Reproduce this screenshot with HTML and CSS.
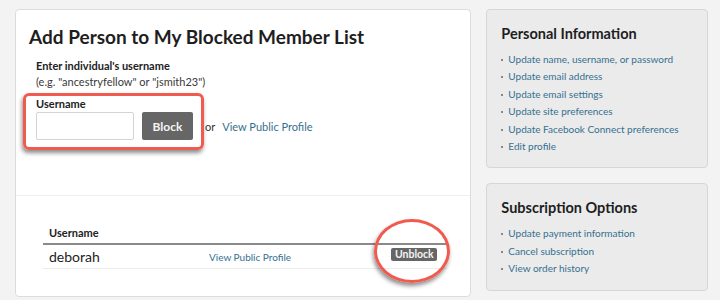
FILE: index.html
```html
<!DOCTYPE html>
<html>
<head>
<meta charset="utf-8">
<link rel="stylesheet" href="styles.css">
</head>
<body>
<div class="page">
  <main class="card main">
    <section class="add">
      <h1 class="title">Add Person to My Blocked Member List</h1>
      <div class="hint-label">Enter individual's username</div>
      <div class="hint">(e.g. "ancestryfellow" or "jsmith23")</div>
      <div class="form-row">
        <div class="field">
          <label class="field-label">Username</label>
          <div class="field-controls">
            <input class="input" type="text">
            <button class="btn">Block</button>
          </div>
          <span class="mark-box"></span>
        </div>
        <span class="or">or</span>
        <a class="link" href="#">View Public Profile</a>
      </div>
    </section>
    <section class="list">
      <div class="table">
        <div class="thead">Username</div>
        <div class="row">
          <span class="name">deborah</span>
          <a class="link small" href="#">View Public Profile</a>
          <span class="unblock-wrap">
            <button class="btn-small">Unblock</button>
            <span class="mark-ellipse"></span>
          </span>
        </div>
      </div>
    </section>
  </main>
  <aside class="side">
    <div class="card side-card">
      <h2 class="side-title">Personal Information</h2>
      <ul class="side-list">
        <li><a href="#">Update name, username, or password</a></li>
        <li><a href="#">Update email address</a></li>
        <li><a href="#">Update email settings</a></li>
        <li><a href="#">Update site preferences</a></li>
        <li><a href="#">Update Facebook Connect preferences</a></li>
        <li><a href="#">Edit profile</a></li>
      </ul>
    </div>
    <div class="card side-card">
      <h2 class="side-title">Subscription Options</h2>
      <ul class="side-list">
        <li><a href="#">Update payment information</a></li>
        <li><a href="#">Cancel subscription</a></li>
        <li><a href="#">View order history</a></li>
      </ul>
    </div>
  </aside>
</div>
</body>
</html>
```

FILE: styles.css
```css
* { box-sizing: border-box; }
html, body { margin: 0; padding: 0; }
body {
  background: #f3f3f3;
  font-family: Lato, "Open Sans", sans-serif;
  color: #222;
  width: 720px;
  height: 300px;
  overflow: hidden;
}
.page {
  display: flex;
  gap: 15px;
  padding: 9px 12px 0 15px;
  align-items: flex-start;
}
.card {
  border: 1px solid #dcdcdc;
  border-radius: 4px;
}
.main {
  background: #fff;
  width: 457px;
  height: 288px;
  display: flex;
  flex-direction: column;
}
.add {
  padding: 15px 13px 0 13px;
  height: 186px;
  border-bottom: 1px solid #efefef;
}
.title {
  margin: 0;
  font-size: 19px;
  font-weight: 700;
  line-height: 24px;
  color: #1e1e1e;
}
.hint-label {
  margin: 9px 0 0 7px;
  font-size: 11px;
  font-weight: 700;
  line-height: 16px;
}
.hint {
  margin-left: 7px;
  font-size: 11px;
  line-height: 15px;
  color: #3a3a3a;
}
.form-row {
  display: flex;
  align-items: flex-end;
  margin: 8px 0 0 7px;
}
.field {
  position: relative;
}
.field-label {
  display: block;
  font-size: 11px;
  font-weight: 700;
  line-height: 14px;
  margin-bottom: 1px;
}
.field-controls {
  display: flex;
  gap: 8px;
}
.input {
  width: 98px;
  height: 28px;
  border: 1px solid #d4d4d4;
  border-radius: 2px;
  background: #fff;
  margin: 0;
}
.btn {
  width: 51px;
  height: 28px;
  border: 0;
  border-radius: 2px;
  background: #666;
  color: #f4f4f4;
  font-family: inherit;
  font-weight: 700;
  font-size: 12px;
  padding: 0;
}
.mark-box {
  position: absolute;
  left: -13px;
  top: -4px;
  width: 181px;
  height: 57px;
  border: 3px solid #f05a4f;
  border-radius: 6px;
  box-shadow: -1px 3px 4px rgba(0,0,0,0.45);
}
.or {
  font-size: 11px;
  margin: 0 0 7px 12px;
  color: #333;
}
.link {
  color: #35708f;
  text-decoration: none;
  font-size: 11px;
  margin: 0 0 7px 7px;
}
.list {
  flex: 1;
  padding: 30px 23px 0 27px;
}
.thead {
  font-size: 11px;
  font-weight: 700;
  line-height: 14px;
  padding: 0 0 3px 6px;
  border-bottom: 2px solid #8a8a8a;
}
.row {
  display: flex;
  align-items: center;
  height: 24px;
  border-bottom: 1px solid #ececec;
  padding-left: 6px;
}
.name {
  font-size: 14px;
  width: 160px;
  color: #222;
}
.link.small {
  margin: 0;
  font-size: 10px;
}
.unblock-wrap {
  position: relative;
  margin-left: auto;
  margin-right: 10px;
  margin-bottom: 4px;
}
.btn-small {
  display: block;
  width: 46px;
  height: 13px;
  border: 0;
  border-radius: 2px;
  background: #666;
  color: #f4f4f4;
  font-family: inherit;
  font-weight: 700;
  font-size: 10.5px;
  line-height: 13px;
  padding: 0;
}
.mark-ellipse {
  position: absolute;
  left: -17px;
  top: -29px;
  width: 76px;
  height: 64px;
  border: 3px solid #f05a4f;
  border-radius: 50%;
  box-shadow: -1px 3px 4px rgba(0,0,0,0.45);
}
.side {
  width: 222px;
  display: flex;
  flex-direction: column;
  gap: 15px;
}
.side-card {
  background: #ebebeb;
  border-color: #d6d6d6;
  padding: 15px 14px 12px 14px;
}
.side-title {
  margin: 0 0 8px 0;
  font-size: 14.5px;
  font-weight: 700;
  line-height: 18px;
  color: #1e1e1e;
}
.side-list {
  list-style: none;
  margin: 0;
  padding: 0;
}
.side-list li {
  font-size: 10px;
  line-height: 17.4px;
  color: #777;
  padding-left: 7px;
  position: relative;
}
.side-list li::before {
  content: "";
  position: absolute;
  left: 0;
  top: 8px;
  width: 2px;
  height: 2px;
  background: #888;
}
.side-list a {
  color: #35708f;
  text-decoration: none;
}
```
